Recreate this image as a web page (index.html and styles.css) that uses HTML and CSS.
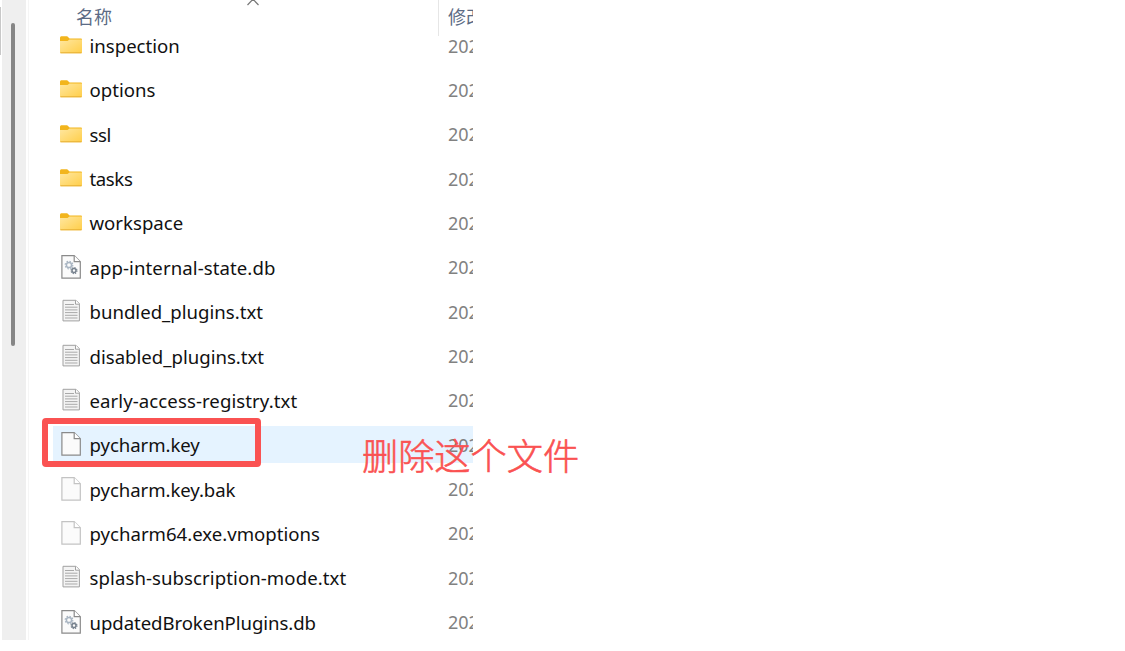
FILE: index.html
```html
<!DOCTYPE html>
<html lang="zh-CN">
<head>
<meta charset="utf-8">
<title>文件</title>
<link rel="stylesheet" href="styles.css">
</head>
<body>
<svg class="defs" aria-hidden="true">
  <defs>
    <linearGradient id="gold" x1="0" y1="0" x2="1" y2="1"><stop offset="0" stop-color="#ffe7a0"/><stop offset="1" stop-color="#ffce49"/></linearGradient>
    <symbol id="folder" viewBox="0 0 22 24"><path d="M0 4.8Q0 3.3 1.2 3.3H7.2L9.6 5.4H21Q22 5.4 22 6.4V9H0Z" fill="#f2b51d"/><path d="M0 8H7.5L9.5 6.5H22V19.3Q22 20.3 21 20.3H1Q0 20.3 0 19.3Z" fill="url(#gold)"/><path d="M.4 19.8H21.6" stroke="#e6ae32" stroke-width="1"/></symbol>
    <symbol id="blank" viewBox="0 0 22 24"><path d="M1.9.6H14.2L20.3 6.7V23.2H1.9Z" fill="#fbfbfb" stroke="currentColor" stroke-width="1.2"/><path d="M14.2.6V6.7H20.3" fill="#fff" stroke="currentColor" stroke-width="1.2"/></symbol>
    <symbol id="text" viewBox="0 0 22 24"><path d="M3 1.3H16L19.4 4.7V21.9H3Z" fill="#f4f4f4" stroke="#a1a1a1"/><path d="M15.5 1.3V5.2H19.4" fill="#fff" stroke="#a1a1a1"/><path d="M5 5.5H14M5 8.2H17.5M5 10.9H17.5M5 13.6H17.5M5 16.3H17.5M5 19H17.5" stroke="#a9a9a9" stroke-width="1"/></symbol>
    <symbol id="gears" viewBox="0 0 22 24"><use href="#blank"/><g fill="none"><circle cx="9" cy="10" r="2.6" stroke="#a9b5c2" stroke-width="1.5"/><circle cx="9" cy="10" r="3.8" stroke="#a9b5c2" stroke-width="1.2" stroke-dasharray="1.5 1.48"/><circle cx="14" cy="15.6" r="2" stroke="#77828e" stroke-width="1.5"/><circle cx="14" cy="15.6" r="3" stroke="#77828e" stroke-width="1.1" stroke-dasharray="1.3 1.06"/></g></symbol>
  </defs>
</svg>
<main class="screen">
  <aside class="gutter"><div class="edge"></div><div class="track"><div class="thumb"></div></div></aside>
  <section class="files">
    <header class="head"><span class="head-name">名称</span><svg class="sort" viewBox="0 0 14 6"><path d="M1.5 5L7-.8L12.5 5" fill="none" stroke="#777" stroke-width="1.2"/></svg><span class="head-date">修改</span></header>
    <ul class="list">
      <li class="row"><svg class="icon"><use href="#folder"/></svg><span class="name">inspection</span><span class="date">202</span></li>
      <li class="row"><svg class="icon"><use href="#folder"/></svg><span class="name">options</span><span class="date">202</span></li>
      <li class="row"><svg class="icon"><use href="#folder"/></svg><span class="name tight">ssl</span><span class="date">202</span></li>
      <li class="row"><svg class="icon"><use href="#folder"/></svg><span class="name tight">tasks</span><span class="date">202</span></li>
      <li class="row"><svg class="icon"><use href="#folder"/></svg><span class="name">workspace</span><span class="date">202</span></li>
      <li class="row"><svg class="icon dark"><use href="#gears"/></svg><span class="name loose">app-internal-state.db</span><span class="date">202</span></li>
      <li class="row"><svg class="icon"><use href="#text"/></svg><span class="name">bundled_plugins.txt</span><span class="date">202</span></li>
      <li class="row"><svg class="icon"><use href="#text"/></svg><span class="name">disabled_plugins.txt</span><span class="date">202</span></li>
      <li class="row"><svg class="icon"><use href="#text"/></svg><span class="name loose">early-access-registry.txt</span><span class="date">202</span></li>
      <li class="row selected"><svg class="icon dark"><use href="#blank"/></svg><span class="name snug">pycharm.key</span><span class="date">202</span></li>
      <li class="row"><svg class="icon"><use href="#blank"/></svg><span class="name snug">pycharm.key.bak</span><span class="date">202</span></li>
      <li class="row"><svg class="icon"><use href="#blank"/></svg><span class="name">pycharm64.exe.vmoptions</span><span class="date">202</span></li>
      <li class="row"><svg class="icon"><use href="#text"/></svg><span class="name loose">splash-subscription-mode.txt</span><span class="date">202</span></li>
      <li class="row"><svg class="icon dark"><use href="#gears"/></svg><span class="name snug">updatedBrokenPlugins.db</span><span class="date">202</span></li>
    </ul>
  </section>
  <div class="marker"></div>
  <div class="note">删除这个文件</div>
</main>
</body>
</html>
```
FILE: styles.css
```css
* { box-sizing: border-box; }
body { margin: 0; background: #fff; font-family: "Noto Sans", "Noto Sans CJK SC", sans-serif; }
.defs { position: absolute; width: 0; height: 0; }
.screen { position: relative; display: flex; width: 1125px; height: 651px; overflow: hidden; background: #fff; }
.gutter { display: flex; width: 29px; height: 640px; border-right: 1px solid #f5f5f5; }
.edge { width: 1px; height: 48px; margin: 7px 1px 0 0; background: #c8c8c8; }
.track { width: 24px; height: 640px; padding: 23px 0 0 9px; background: #efefef; }
.thumb { width: 4px; height: 323px; border-radius: 2px; background: #868686; }
.files { width: 444px; height: 651px; overflow: hidden; }
.head { display: flex; height: 36px; margin-bottom: -13px; font: 18px/33px "Noto Sans CJK SC", sans-serif; color: #5b6b85; white-space: nowrap; }
.head-name { flex: none; width: 216px; padding-left: 47px; }
.sort { flex: none; width: 14px; height: 6px; margin-left: 1px; }
.head-date { flex: none; margin-left: 178px; padding-left: 9px; border-left: 1px solid #e6e6e6; }
.list { margin: 0; padding: 0; list-style: none; }
.row { display: flex; align-items: center; width: 444px; height: 37px; margin-bottom: 7.36px; padding-left: 31px; font-size: 18.6px; line-height: 37px; color: #111; white-space: nowrap; }
.list .row:first-child { margin-top: 3.5px; }
.selected { background: linear-gradient(#e5f3ff, #e5f3ff) 24px 0 no-repeat; }
.icon { flex: none; width: 22px; height: 24px; color: #c3c3c3; }
.dark { color: #8a8a8a; }
.name { flex: none; width: 366px; padding: 1px 0 0 7.5px; }
.loose { letter-spacing: .08px; }
.snug { letter-spacing: -.07px; }
.tight { letter-spacing: -.4px; }
.date { flex: none; padding-top: 2px; font-size: 18px; color: #818181; }
.marker { position: absolute; left: 42px; top: 418px; width: 219px; height: 49px; border: 6px solid #fa5252; border-radius: 4px; }
.note { position: absolute; left: 362px; top: 427px; font: 300 36.2px/54px "Noto Sans CJK SC", sans-serif; color: #fa5252; -webkit-text-stroke: .6px #fa5252; white-space: nowrap; }
```
